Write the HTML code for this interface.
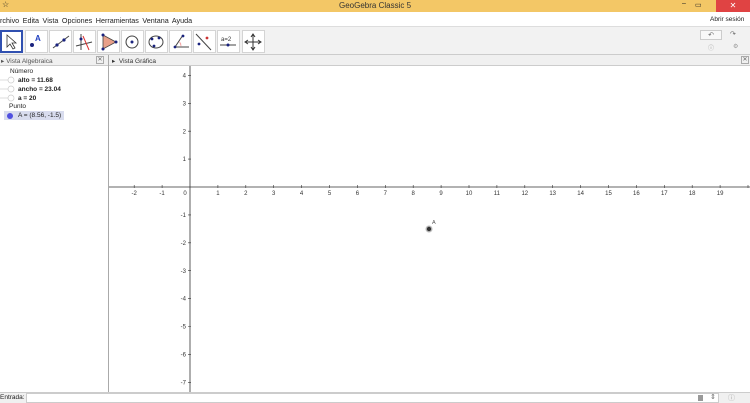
<!DOCTYPE html>
<html><head><meta charset="utf-8"><style>
*{margin:0;padding:0;box-sizing:border-box}
body{width:750px;height:403px;overflow:hidden;background:#fff;font-family:"Liberation Sans",sans-serif;font-size:7px;color:#222;position:relative}
.a{position:absolute}
.btn{position:absolute;top:30px;width:23px;height:23px;background:#fff;border:1px solid #d4d4d4}
</style></head><body>
<div class="a" style="left:0;top:0;width:750px;height:12px;background:#f3c766"></div>
<div class="a" style="left:0;top:1px;width:750px;text-align:center;font-size:8px;color:#333">GeoGebra Classic 5</div>
<div class="a" style="left:2px;top:0;font-size:8px">☆</div>
<div class="a" style="left:716px;top:0;width:34px;height:12px;background:#e04343;color:#fff;text-align:center;font-size:8px;line-height:12px">✕</div>
<div class="a" style="left:695px;top:1px;font-size:7px">▭</div>
<div class="a" style="left:682px;top:0px;font-size:7px">–</div>
<div class="a" style="left:0;top:12px;width:750px;height:15px;background:#fff;border-bottom:1px solid #ddd"></div>
<div class="a" style="left:0;top:16px;font-size:7.2px;word-spacing:1.5px">rchivo Edita Vista Opciones Herramientas Ventana Ayuda</div>
<div class="a" style="left:710px;top:16px;font-size:6.5px">Abrir sesión</div>
<div class="a" style="left:0;top:27px;width:750px;height:28px;background:#f2f2f2;border-bottom:1px solid #ccc"></div>
<div class="btn" style="left:0;border:2px solid #3050b0"></div>
<div class="btn" style="left:25px"></div><div class="btn" style="left:49px"></div><div class="btn" style="left:73px"></div>
<div class="btn" style="left:97px"></div><div class="btn" style="left:121px"></div><div class="btn" style="left:145px"></div>
<div class="btn" style="left:169px"></div><div class="btn" style="left:193px"></div><div class="btn" style="left:217px"></div><div class="btn" style="left:242px"></div>
<svg class="a" style="left:0;top:30px" width="270" height="24">
<path d="M7 5 L7 17 L10 14 L13 19 L15 18 L12 13 L16 13 Z" fill="#fff" stroke="#333" stroke-width="0.8"/>
<circle cx="32" cy="15" r="2" fill="#1a237e"/><text x="35" y="11" font-size="8" fill="#2040c0" font-weight="bold" font-family="Liberation Sans">A</text>
<line x1="53" y1="18" x2="69" y2="6" stroke="#444"/><circle cx="57" cy="15" r="1.6" fill="#1a237e"/><circle cx="64" cy="10" r="1.6" fill="#1a237e"/>
<line x1="81" y1="4" x2="81" y2="20" stroke="#444"/><line x1="76" y1="16" x2="92" y2="12" stroke="#444"/><line x1="83" y1="6" x2="89" y2="20" stroke="#d33"/><circle cx="81" cy="9" r="1.5" fill="#1a237e"/>
<polygon points="103,5 116,12 103,19" fill="#e8a08a" stroke="#444" stroke-width="0.8"/><circle cx="103" cy="5" r="1.5" fill="#1a237e"/><circle cx="116" cy="12" r="1.5" fill="#1a237e"/><circle cx="103" cy="19" r="1.5" fill="#1a237e"/>
<circle cx="132" cy="12" r="6" fill="none" stroke="#444"/><circle cx="132" cy="12" r="1.5" fill="#1a237e"/>
<ellipse cx="156" cy="12" rx="7" ry="6" fill="none" stroke="#444"/><circle cx="152" cy="9" r="1.4" fill="#1a237e"/><circle cx="159" cy="8" r="1.4" fill="#1a237e"/><circle cx="154" cy="16" r="1.4" fill="#1a237e"/>
<path d="M175 17 L183 5 M175 17 L189 17" stroke="#444" fill="none"/><path d="M179 11 A5 5 0 0 1 181 17" fill="#f3a0a0"/><circle cx="175" cy="17" r="1.4" fill="#1a237e"/><circle cx="183" cy="6" r="1.4" fill="#1a237e"/>
<line x1="196" y1="4" x2="211" y2="20" stroke="#444"/><circle cx="199" cy="14" r="1.4" fill="#1a237e"/><circle cx="207" cy="8" r="1.4" fill="#c33"/>
<text x="221" y="11" font-size="6" fill="#333" font-family="Liberation Sans">a=2</text><line x1="220" y1="15" x2="236" y2="15" stroke="#444"/><circle cx="228" cy="15" r="1.5" fill="#1a237e"/>
<path d="M253 5 L253 19 M246 12 L260 12 M251 7 L253 4 L255 7 M251 17 L253 20 L255 17 M248 10 L245 12 L248 14 M258 10 L261 12 L258 14" stroke="#333" fill="none"/>
</svg>
<div class="a" style="left:700px;top:30px;width:22px;height:10px;border:1px solid #ccc;background:#f8f8f8;font-size:7px;text-align:center;line-height:9px;color:#666">↶</div>
<div class="a" style="left:730px;top:30px;font-size:7px;color:#666">↷</div>
<div class="a" style="left:708px;top:43px;font-size:6px;color:#999">ⓘ</div>
<div class="a" style="left:733px;top:43px;font-size:6px;color:#999">⚙</div>
<div class="a" style="left:0;top:55px;width:750px;height:11px;background:#f0f0f0;border-bottom:1px solid #ccc"></div>
<div class="a" style="left:1px;top:57px;font-size:6.5px;color:#555">▸ Vista Algebraica</div>
<div class="a" style="left:96px;top:56px;width:8px;height:8px;border:1px solid #aaa;font-size:6px;line-height:6px;text-align:center;color:#666">✕</div>
<div class="a" style="left:741px;top:56px;width:8px;height:8px;border:1px solid #aaa;font-size:6px;line-height:6px;text-align:center;color:#666">✕</div>
<div class="a" style="left:108px;top:55px;width:1px;height:337px;background:#aaa"></div>
<div class="a" style="left:112px;top:57px;font-size:6.5px;color:#333">▸ &nbsp;Vista Gráfica</div>
<div class="a" style="left:10px;top:68px;font-size:6.5px">Número</div>
<div class="a" style="left:18px;top:77px;font-size:6.5px;font-weight:bold">alto = 11.68</div>
<div class="a" style="left:18px;top:86px;font-size:6.5px;font-weight:bold">ancho = 23.04</div>
<div class="a" style="left:18px;top:95px;font-size:6.5px;font-weight:bold">a = 20</div>
<div class="a" style="left:9px;top:103px;font-size:6.5px">Punto</div>
<div class="a" style="left:4px;top:111px;width:60px;height:9px;background:#d8dcee"></div>
<div class="a" style="left:18px;top:112px;font-size:6.5px">A = (8.56, -1.5)</div>
<svg class="a" style="left:0;top:66px" width="108" height="60">
<circle cx="11" cy="14" r="3" fill="#fff" stroke="#ccc" stroke-width="0.7"/><circle cx="11" cy="23" r="3" fill="#fff" stroke="#ccc" stroke-width="0.7"/><circle cx="11" cy="32" r="3" fill="#fff" stroke="#ccc" stroke-width="0.7"/>
<circle cx="10" cy="50" r="3" fill="#5050e0"/>
<path d="M0 14H8M0 23H8M0 32H8" stroke="#bbb" stroke-width="0.6"/>
</svg>
<svg class="a" style="left:109px;top:66px" width="641" height="326" viewBox="109 66 641 326" font-family="Liberation Sans" font-size="6" fill="#333">
<line x1="109" y1="187" x2="750" y2="187" stroke="#333" stroke-width="0.8"/>
<line x1="190" y1="66" x2="190" y2="392" stroke="#333" stroke-width="0.8"/>
<g stroke="#333" stroke-width="0.6">
<path d="M134.2 185v3M162.1 185v3M217.9 185v3M245.8 185v3M273.7 185v3M301.6 185v3M329.5 185v3M357.4 185v3M385.3 185v3M413.2 185v3M441.1 185v3M469 185v3M496.9 185v3M524.8 185v3M552.7 185v3M580.6 185v3M608.5 185v3M636.4 185v3M664.3 185v3M692.2 185v3M720.1 185v3M748 185v3"/>
<path d="M188 75.4h3M188 103.3h3M188 131.2h3M188 159.1h3M188 214.9h3M188 242.8h3M188 270.7h3M188 298.6h3M188 326.5h3M188 354.4h3M188 382.3h3"/>
</g>
<g text-anchor="middle">
<text x="134.2" y="195">-2</text><text x="162.1" y="195">-1</text><text x="185" y="195">0</text><text x="217.9" y="195">1</text><text x="245.8" y="195">2</text><text x="273.7" y="195">3</text><text x="301.6" y="195">4</text><text x="329.5" y="195">5</text><text x="357.4" y="195">6</text><text x="385.3" y="195">7</text><text x="413.2" y="195">8</text><text x="441.1" y="195">9</text><text x="469" y="195">10</text><text x="496.9" y="195">11</text><text x="524.8" y="195">12</text><text x="552.7" y="195">13</text><text x="580.6" y="195">14</text><text x="608.5" y="195">15</text><text x="636.4" y="195">16</text><text x="664.3" y="195">17</text><text x="692.2" y="195">18</text><text x="720.1" y="195">19</text>
</g>
<g text-anchor="end">
<text x="186" y="77.5">4</text><text x="186" y="105.4">3</text><text x="186" y="133.3">2</text><text x="186" y="161.2">1</text><text x="186" y="217">-1</text><text x="186" y="244.9">-2</text><text x="186" y="272.8">-3</text><text x="186" y="300.7">-4</text><text x="186" y="328.6">-5</text><text x="186" y="356.5">-6</text><text x="186" y="384.4">-7</text>
</g>
<circle cx="429" cy="229" r="3.5" fill="#bbb"/><circle cx="429" cy="229" r="2.2" fill="#333"/>
<text x="432" y="224" font-size="5.5" fill="#555">A</text>
</svg>
<div class="a" style="left:0;top:392px;width:750px;height:11px;background:#f0f0f0;border-top:1px solid #ccc"></div>
<div class="a" style="left:0;top:394px;font-size:6.5px">Entrada:</div>
<div class="a" style="left:26px;top:393px;width:693px;height:10px;background:#fff;border:1px solid #ccc"></div>
<div class="a" style="left:698px;top:395px;width:5px;height:6px;background:#999"></div>
<div class="a" style="left:710px;top:393px;font-size:7px;color:#666">⇕</div>
<div class="a" style="left:728px;top:393px;font-size:7px;color:#aaa">ⓘ</div>
</body></html>
